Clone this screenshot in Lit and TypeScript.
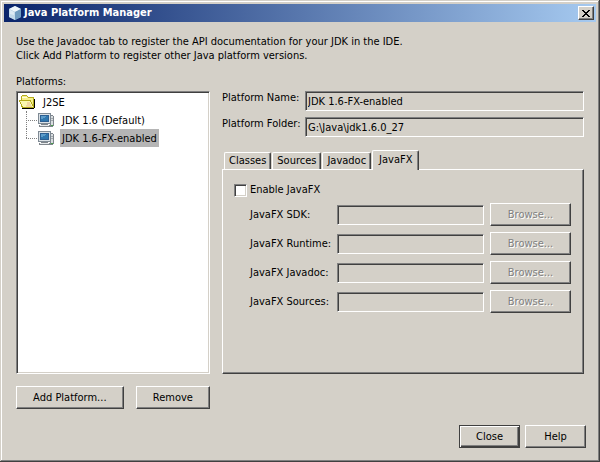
import { LitElement, html, css, svg } from "lit";
import { customElement, state } from "lit/decorators.js";

const cube = svg`
  <path d="M7 0 L13 3 L13 11 L7 14 L1 11 L1 3 Z" fill="#8fb4d0"/>
  <path d="M7 0 L13 3 L7 6 L1 3 Z" fill="#eef6fb"/>
  <path d="M1 3 L7 6 L7 14 L1 11 Z" fill="#c2daea"/>
  <path d="M7 6 L13 3 L13 11 L7 14 Z" fill="#6f9cc0"/>
  <path d="M2 4 L6 6 L6 9 L2 8 Z" fill="#dbeaf4"/>`;

const folder = svg`
  <g shape-rendering="crispEdges">
    <path d="M15 5h1v9h-1v1h-12v-1h12z" fill="#000"/>
    <path d="M2 2h1v-1h5v1h1v1h6v11h-12v-1h-1z" fill="#b5ac1c"/>
    <path d="M3 2h5v1h1v1h5v9h-11z" fill="#f6f08a"/>
    <path d="M3 3h5v1h-5z" fill="#fffde0"/>
    <path d="M0 6h12v2h1v2h1v2h1v2h-12v-2h-1v-2h-1v-2h-1z" fill="#b5ac1c"/>
    <path d="M1 7h10v1h1v2h1v2h1v1h-10v-1h-1v-2h-1v-2h-1z" fill="#fbf7b0"/>
    <path d="M8 8h3v2h1v2h1v1h-6v-2h1z" fill="#f3d8a0"/>
  </g>`;

const computer = svg`
  <g shape-rendering="crispEdges">
    <path d="M12 2h3v1h1v10h-1v1h-10v-2h7z" fill="#7e858c"/>
    <path d="M13 3h2v9h-2z" fill="#d9dde0"/>
    <path d="M13 5h2v1h-2zM13 7h2v1h-2z" fill="#a2a8ad"/>
    <path d="M0 0h13v11h-13z" fill="#7f8a94"/>
    <path d="M1 1h11v9h-11z" fill="#dce2e6"/>
    <path d="M2 2h9v7h-9z" fill="#2c5f92"/>
    <path d="M3 3h7v5h-7z" fill="#2f77ae"/>
    <path d="M3 3h5v1h-1v1h-2v1h-2z" fill="#5c9cca"/>
    <path d="M3 11h7v1h2v2h-11v-2h2z" fill="#80868c"/>
    <path d="M2 12h9v1h-9z" fill="#e6e9eb"/>
    <path d="M13 12h2v1h-2z" fill="#4aa04a"/>
  </g>`;

const closeMark = svg`<path d="M0 0h2v1h1v1h2v-1h1v-1h2v1h-1v1h-1v1h-1v1h1v1h1v1h1v1h-2v-1h-1v-1h-2v1h-1v1h-2v-1h1v-1h1v-1h1v-1h-1v-1h-1v-1h-1z" fill="#000"/>`;

const icon = (w: number, h: number, body: unknown) => html`
  <svg width=${w} height=${h} viewBox="0 0 ${w} ${h}" aria-hidden="true">${body}</svg>`;

@customElement("app-root")
export class AppRoot extends LitElement {
  static styles = css`
    :host {
      display: block;
      --face: #d4d0c8;
      --dark: #404040;
      --mid: #808080;
      --font: "DejaVu Sans Condensed", "DejaVu Sans", sans-serif;
      font: 11px/14px var(--font);
      color: #000;
    }
    * { box-sizing: border-box; }
    svg { display: block; flex: none; }
    button, input { font: inherit; color: inherit; margin: 0; border-radius: 0; outline: none; }

    .window {
      display: flex;
      flex-direction: column;
      min-height: 100vh;
      padding: 2px;
      background: var(--face);
      box-shadow: inset -1px -1px var(--dark), inset 1px 1px var(--face),
        inset -2px -2px var(--mid), inset 2px 2px #fff;
    }
    .titlebar {
      display: flex;
      align-items: center;
      gap: 2px;
      height: 18px;
      margin: 2px 2px 0;
      padding: 0 2px 0 4px;
      background: linear-gradient(to right, #0a246a, #a6caf0);
      color: #fff;
    }
    .title { flex: 1; margin: 0; font-size: 11px; font-weight: bold; }

    .content {
      flex: 1;
      display: flex;
      flex-direction: column;
      padding: 13px 12px 12px 14px;
    }
    .intro { margin: 0; }
    .main {
      flex: 1;
      display: flex;
      gap: 12px;
      margin: 12px 2px 0 0;
    }
    .left { display: flex; flex-direction: column; flex: none; width: 194px; }
    .heading { margin: 0 0 2px; }

    .tree {
      flex: 1;
      min-height: 120px;
      margin: 0;
      padding: 0 2px;
      list-style: none;
      background: #fff;
    }
    .tree, .field, .box {
      border: 1px solid;
      border-color: var(--mid) #fff #fff var(--mid);
      box-shadow: inset 1px 1px var(--dark), inset -1px -1px var(--face);
    }
    .tree ul { margin: 0 0 0 7px; padding: 0; list-style: none; }
    .node { display: flex; align-items: center; height: 18px; gap: 6px; }
    .root-node { height: 19px; padding-top: 1px; gap: 5px; }
    .branch { position: relative; padding-left: 12px; }
    .branch::before, .branch::after { content: ""; position: absolute; left: 0; }
    .branch::before { top: 0; height: 100%; border-left: 1px dotted var(--mid); }
    .branch:last-child::before { height: 9px; }
    .branch::after { top: 9px; width: 11px; border-top: 1px dotted var(--mid); }
    .label { padding: 3px 2px 1px; }
    .selected { background: #b5b5b5; }

    button {
      height: 23px;
      padding: 0 16px;
      border: 1px solid;
      border-color: #fff var(--dark) var(--dark) #fff;
      background: var(--face);
      box-shadow: inset -1px -1px var(--mid);
      white-space: nowrap;
    }
    button:disabled { color: var(--mid); text-shadow: 1px 1px #fff; }
    .dismiss { width: 16px; height: 14px; padding: 0; }
    .dismiss svg { margin: 0 auto; }
    .default {
      border-color: var(--dark);
      box-shadow: inset 1px 1px #fff, inset -1px -1px var(--dark), inset -2px -2px var(--mid);
    }

    .actions { display: flex; gap: 12px; margin-top: 12px; }
    .actions button { flex: 1 1 auto; }

    .right { flex: 1; display: flex; flex-direction: column; min-width: 0; }
    .summary {
      display: grid;
      grid-template-columns: 83px 1fr;
      gap: 6px 0;
      margin-top: 16px;
    }
    .field {
      width: 100%;
      min-width: 0;
      height: 20px;
      padding: 0 2px;
      background: var(--face);
    }

    .tabs {
      display: flex;
      align-items: flex-end;
      gap: 1px;
      margin-top: 13px;
      padding: 0 2px;
    }
    .tab {
      height: 17px;
      padding: 0 4px;
      border-bottom: 0;
      border-radius: 2px 2px 0 0;
      box-shadow: inset -1px 0 var(--mid);
    }
    .tab.active {
      position: relative;
      height: 20px;
      margin-bottom: -1px;
      padding: 0 6px 2px;
    }
    .panel {
      flex: 1;
      margin-bottom: 35px;
      padding: 12px 12px 24px 11px;
      border: 1px solid;
      border-color: #fff var(--dark) var(--dark) #fff;
      box-shadow: inset -1px -1px var(--mid);
    }
    .check { display: flex; align-items: center; gap: 3px; height: 16px; }
    .box { appearance: none; width: 13px; height: 13px; background: #fff; }
    .box:checked::after { content: "✓"; display: block; line-height: 11px; text-align: center; }
    .rows {
      display: grid;
      grid-template-columns: 87px 1fr 81px;
      align-items: center;
      row-gap: 6px;
      margin: 5px 0 0 16px;
    }
    .rows .field { width: calc(100% - 6px); }

    .footer { display: flex; justify-content: flex-end; gap: 5px; padding-top: 16px; }
    .footer button { width: 61px; }
  `;

  static tabNames = ["Classes", "Sources", "Javadoc", "JavaFX"];
  static paths = ["JavaFX SDK:", "JavaFX Runtime:", "JavaFX Javadoc:", "JavaFX Sources:"];

  @state() private tab = "JavaFX";
  @state() private platform = "JDK 1.6-FX-enabled";
  @state() private fx = false;

  render() {
    return html`
      <div class="window">
        <header class="titlebar">
          ${icon(14, 14, cube)}
          <h1 class="title">Java Platform Manager</h1>
          <button class="dismiss" aria-label="Close window">${icon(8, 7, closeMark)}</button>
        </header>
        <div class="content">
          <p class="intro">
            Use the Javadoc tab to register the API documentation for your JDK in the IDE.<br />
            Click Add Platform to register other Java platform versions.
          </p>
          <div class="main">
            <section class="left">
              <p class="heading" id="platforms">Platforms:</p>
              <ul class="tree" role="tree" aria-labelledby="platforms">
                <li role="treeitem" aria-expanded="true">
                  <div class="node root-node">${icon(17, 16, folder)}<span class="label">J2SE</span></div>
                  <ul role="group">
                    ${["JDK 1.6 (Default)", "JDK 1.6-FX-enabled"].map((name) => html`
                      <li class="node branch" role="treeitem" aria-selected=${name === this.platform}
                        @click=${() => (this.platform = name)}>
                        ${icon(16, 14, computer)}
                        <span class="label ${name === this.platform ? "selected" : ""}">${name}</span>
                      </li>`)}
                  </ul>
                </li>
              </ul>
              <div class="actions">
                <button>Add Platform...</button>
                <button>Remove</button>
              </div>
            </section>
            <section class="right">
              <div class="summary">
                <label for="name">Platform Name:</label>
                <input class="field" id="name" readonly .value=${this.platform} />
                <label for="folder">Platform Folder:</label>
                <input class="field" id="folder" readonly value="G:\\Java\\jdk1.6.0_27" />
              </div>
              <div class="tabs" role="tablist">
                ${AppRoot.tabNames.map((name) => html`
                  <button class="tab ${name === this.tab ? "active" : ""}" role="tab"
                    aria-selected=${name === this.tab} @click=${() => (this.tab = name)}>${name}</button>`)}
              </div>
              <div class="panel" role="tabpanel">
                <label class="check">
                  <input class="box" type="checkbox" .checked=${this.fx}
                    @change=${() => (this.fx = !this.fx)} />Enable JavaFX
                </label>
                <div class="rows">
                  ${AppRoot.paths.map((name, i) => html`
                    <label for="path${i}">${name}</label>
                    <input class="field" id="path${i}" ?disabled=${!this.fx} />
                    <button ?disabled=${!this.fx}>Browse...</button>`)}
                </div>
              </div>
            </section>
          </div>
          <footer class="footer">
            <button class="default">Close</button>
            <button>Help</button>
          </footer>
        </div>
      </div>`;
  }
}
